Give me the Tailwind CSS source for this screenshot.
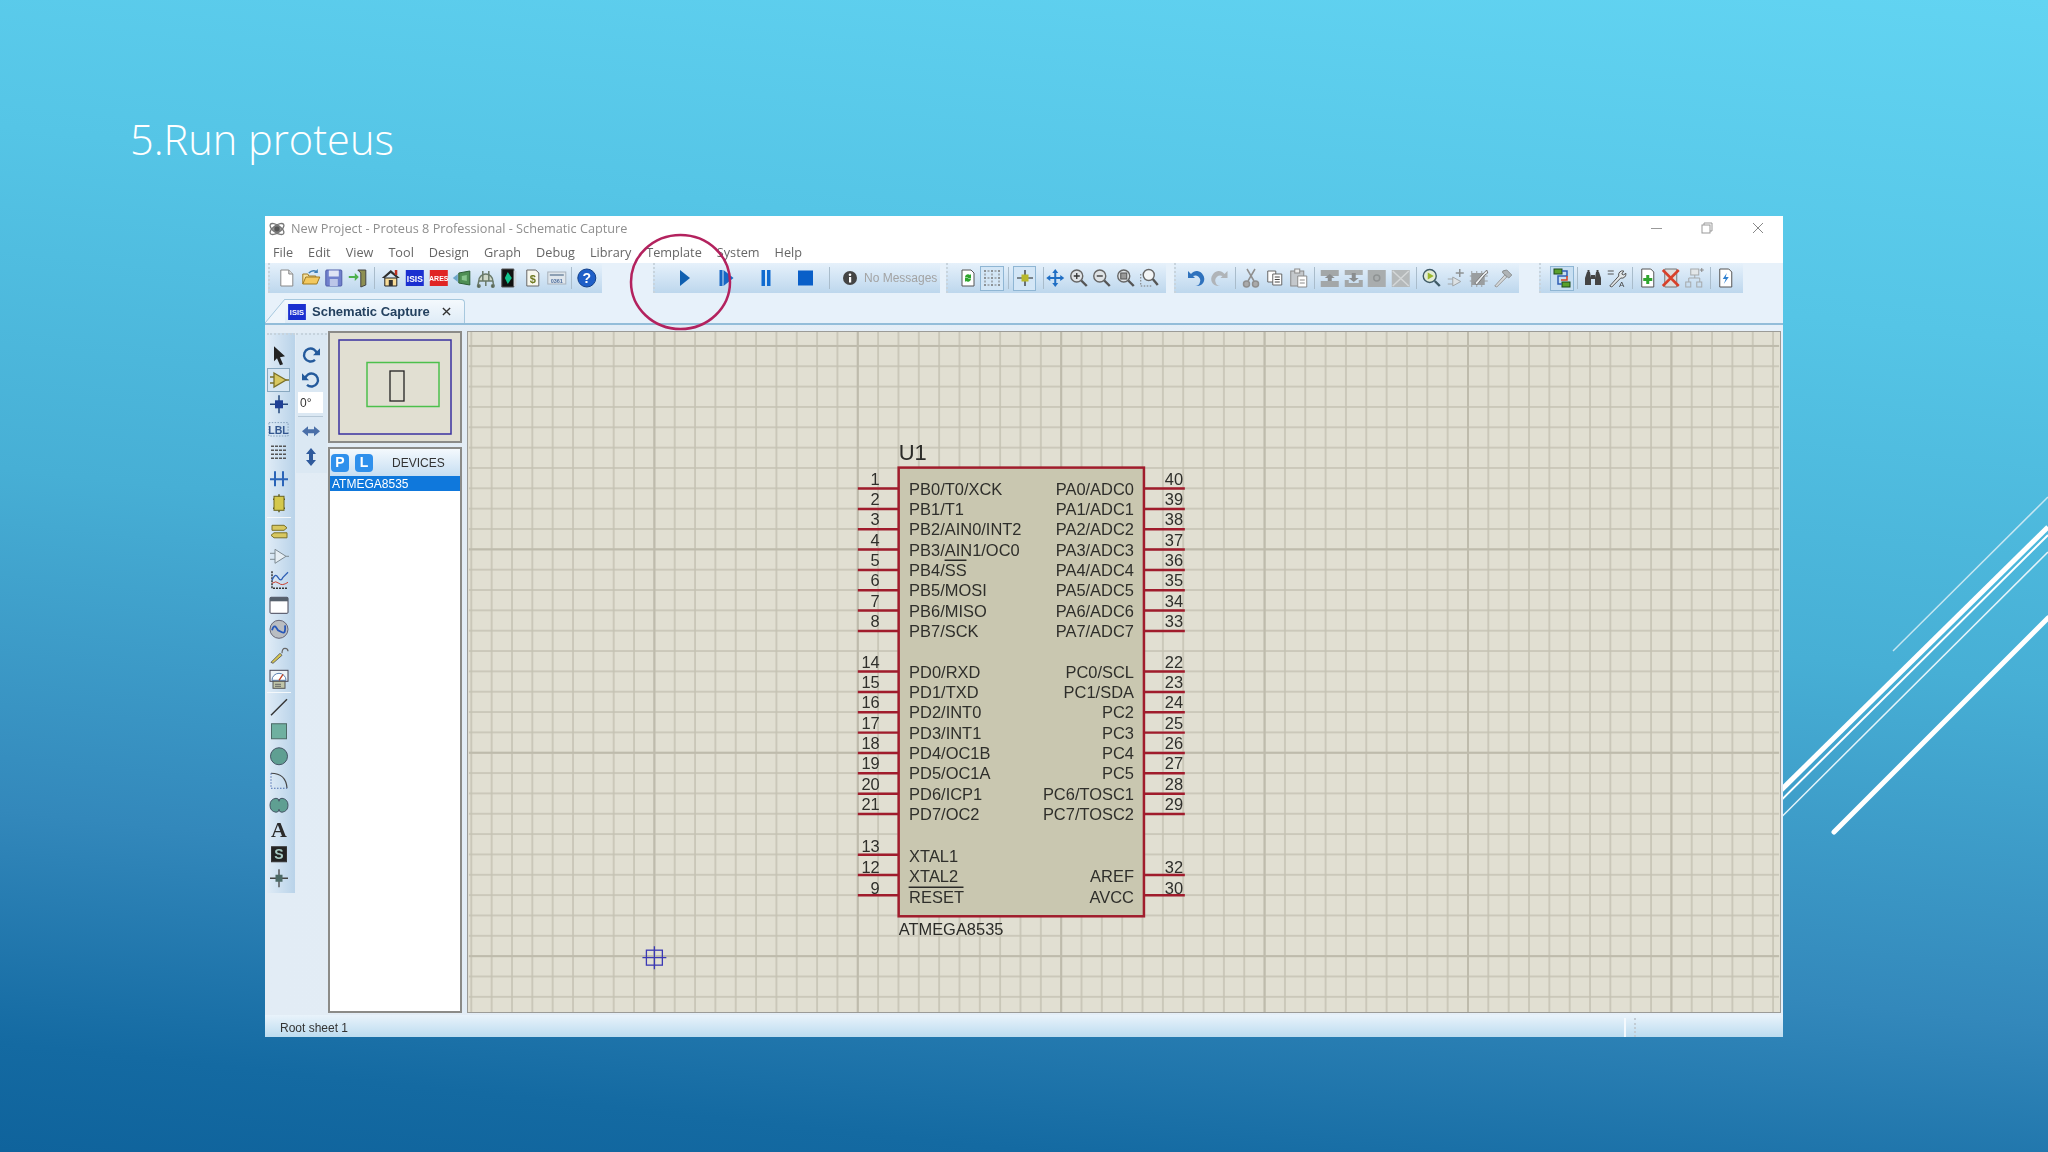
<!DOCTYPE html>
<html lang="en">
<head>
<meta charset="UTF-8">
<title>5.Run proteus</title>
<script src="https://cdn.jsdelivr.net/npm/@tailwindcss/browser@4"></script>
</head>
<body class="relative h-[1152px] w-[2048px] overflow-hidden bg-[linear-gradient(186deg,#62d4f2_0%,#55c5e6_25%,#47afd5_50%,#3388bb_75%,#146aa2_92%,#0f639c_100%)] font-['Liberation_Sans',sans-serif]">

<!-- slide decoration -->
<svg class="absolute inset-0" width="2048" height="1152" fill="none" stroke="#fff">
  <path d="M1893 651L2048 497" stroke="#c4e6f2" stroke-width="1.5"/>
  <path d="M1700 870L2048 527" stroke-width="5"/>
  <path d="M1700 881L2048 535" stroke-width="2"/>
  <path d="M1700 898L2048 552" stroke="#e4f4fa" stroke-width="1.5"/>
  <path d="M1834 832L2048 618" stroke-width="5" stroke-linecap="round"/>
</svg>

<div class="relative h-[216px] pt-[109px] pl-[130px]">
  <h1 class="font-['Open_Sans',sans-serif] text-[41.5px] leading-[60px] font-light text-white">5.Run proteus</h1>
</div>

<!-- proteus window -->
<div class="relative ml-[265px] flex h-[821px] w-[1518px] flex-col bg-white text-[12px] blur-[0.4px]">
  <!-- title bar -->
  <div class="flex h-[26px] items-center pl-[3px] font-['Open_Sans',sans-serif] text-[12.7px] text-[#8f8f8f]">
    <svg class="mr-[5px] h-[18px] w-[18px]" viewBox="0 0 20 20" fill="none" stroke="#777" stroke-width="1.5"><ellipse cx="10" cy="10" rx="9" ry="4" transform="rotate(35 10 10)"/><ellipse cx="10" cy="10" rx="9" ry="4" transform="rotate(-35 10 10)"/><circle cx="10" cy="10" r="3.5" fill="#555"/></svg>
    <span>New Project - Proteus 8 Professional - Schematic Capture</span>
    <div class="ml-auto flex items-center gap-[39px] pr-[19px] pb-[2px]">
      <div class="h-px w-[11px] bg-[#999]"></div>
      <svg class="h-[12px] w-[12px]" viewBox="0 0 12 12" fill="none" stroke="#999"><path d="M3 3V1h8v8H9"/><rect x="1" y="3" width="8" height="8"/></svg>
      <svg class="h-[12px] w-[12px]" viewBox="0 0 12 12" fill="none" stroke="#888"><path d="M1 1l10 10M11 1L1 11"/></svg>
    </div>
  </div>
  <!-- menu -->
  <div class="flex h-[21px] items-center gap-[15px] pl-[8px] font-['Open_Sans',sans-serif] text-[12.7px] text-[#666]">
    <span>File</span><span>Edit</span><span>View</span><span>Tool</span><span>Design</span><span>Graph</span><span>Debug</span><span>Library</span><span>Template</span><span>System</span><span>Help</span>
  </div>

  <!-- toolbars -->
  <div class="flex h-[30px] items-stretch bg-[#e7f1fa] pl-[3px]">
    <!-- file / app toolbar -->
    <div class="flex w-[334px] items-center border-l-2 border-dotted border-[#c8d4dd] bg-linear-to-b from-[#e6f1fb] to-[#bdd7ed] pl-[5px]">
      <svg class="h-[20px] w-[23.6px]" viewBox="0 0 20 20"><path d="M4 2h8l4 4v12H4z" fill="#fff" stroke="#888"/><path d="M12 2v4h4" fill="#ddd" stroke="#888"/></svg>
      <svg class="h-[20px] w-[23.6px]" viewBox="0 0 20 20"><path d="M2 16V6h5l1 2h7v2" fill="#f6e2a0" stroke="#a07a20"/><path d="M2 16l3-7h14l-3 7z" fill="#f3c95f" stroke="#a07a20"/><path d="M8 5q4-4 8-1" fill="none" stroke="#3f7fb5" stroke-width="1.5"/><path d="M17 1v4h-4z" fill="#3f7fb5"/></svg>
      <svg class="h-[20px] w-[23.6px]" viewBox="0 0 20 20"><rect x="2" y="2" width="16" height="16" rx="1" fill="#7080cc" stroke="#4f5ca8"/><rect x="5" y="2.5" width="10" height="6" fill="#dfe4f5"/><rect x="6" y="11" width="8" height="7" fill="#bcc6e8"/></svg>
      <svg class="h-[20px] w-[23.6px]" viewBox="0 0 20 20"><path d="M10 2h8v15l-5 2V5z" fill="#8d8f52" stroke="#444"/><path d="M1 8h6V5l4 4-4 4v-3H1z" fill="#4cb04c"/></svg>
      <div class="mx-[4.5px] h-[22px] w-px bg-[#a9bccb]"></div>
      <svg class="h-[20px] w-[23.6px]" viewBox="0 0 20 20"><path d="M4 10h12v8H4z" fill="#f7dc98" stroke="#222"/><path d="M10 2L1 10h3l6-5 6 5h3z" fill="#2f2f2f"/><rect x="14" y="2" width="2.5" height="5" fill="#c03020"/><rect x="8" y="12" width="4" height="6" fill="#333"/></svg>
      <svg class="h-[20px] w-[23.6px]" viewBox="0 0 20 20"><rect x="1" y="2" width="18" height="16" fill="#1a2fd0"/><text x="10" y="13.5" text-anchor="middle" font-size="8.5" font-weight="700" fill="#fff">ISIS</text></svg>
      <svg class="h-[20px] w-[23.6px]" viewBox="0 0 20 20"><rect x="1" y="2" width="18" height="16" fill="#e02424"/><text x="10" y="13" text-anchor="middle" font-size="7" font-weight="700" fill="#fff">ARES</text></svg>
      <svg class="h-[20px] w-[23.6px]" viewBox="0 0 20 20"><path d="M7 5l11-2v14L7 15z" fill="#4f8f55" stroke="#2d5f36"/><path d="M10 8l5-1v6l-5-1z" fill="#86c48c"/><path d="M1 10l5-4v8z" fill="#6ba5c8"/></svg>
      <svg class="h-[20px] w-[23.6px]" viewBox="0 0 20 20" fill="none" stroke="#6a7a6a" stroke-width="1.5"><path d="M3 13a7 7 0 1 1 14 0z" fill="#cfd8c8"/><path d="M3 13l-1 5M17 13l1 5M10 13v5M7 3v10M13 3v10"/><circle cx="3" cy="18" r="1.3" fill="#333"/><circle cx="17" cy="18" r="1.3" fill="#333"/></svg>
      <svg class="h-[20px] w-[23.6px]" viewBox="0 0 20 20"><path d="M3 1h12v18H3z" fill="#111" stroke="#555"/><path d="M9 4l4 6-4 6-3-6z" fill="#11c48c"/><rect x="15" y="3" width="2.5" height="15" fill="#cfd6dd"/></svg>
      <svg class="h-[20px] w-[23.6px]" viewBox="0 0 20 20"><path d="M4 2h9l3 3v13H4z" fill="#f7f7ee" stroke="#666"/><text x="10" y="15" text-anchor="middle" font-size="11" font-weight="700" fill="#6f7a22">$</text></svg>
      <svg class="h-[20px] w-[23.6px]" viewBox="0 0 20 20"><rect x="1" y="4" width="18" height="12" fill="#dfe6ec" stroke="#a8b2bc"/><rect x="3" y="6" width="14" height="2" fill="#8da0b4"/><text x="10" y="14.5" text-anchor="middle" font-size="5.5" font-weight="700" fill="#4f6f9f">0361</text></svg>
      <div class="mx-[3px] h-[22px] w-px bg-[#a9bccb]"></div>
      <svg class="h-[20px] w-[23.6px]" viewBox="0 0 20 20"><circle cx="10" cy="10" r="9" fill="#1f5fc8" stroke="#12408a"/><text x="10" y="15" text-anchor="middle" font-size="14" font-weight="700" fill="#fff">?</text></svg>
    </div>
    <!-- simulation toolbar -->
    <div class="ml-[51px] flex w-[287px] items-center border-l-2 border-dotted border-[#c8d4dd] bg-linear-to-b from-[#e6f1fb] to-[#bdd7ed] pl-[9px]">
      <svg class="h-[20px] w-[41px]" viewBox="0 0 41 20"><path d="M16 2l10 8-10 8z" fill="#0f5fb0"/></svg>
      <svg class="h-[20px] w-[41px]" viewBox="0 0 41 20"><rect x="14.5" y="2" width="3" height="16" fill="#1766c4"/><path d="M18.500 2l10 8-10 8z" fill="#1766c4"/></svg>
      <svg class="h-[20px] w-[40px]" viewBox="0 0 40 20"><rect x="15.500" y="2" width="3.5" height="16" fill="#106bd0"/><rect x="21" y="2" width="3.5" height="16" fill="#106bd0"/></svg>
      <svg class="h-[20px] w-[40px]" viewBox="0 0 40 20"><rect x="12" y="2.5" width="15" height="15" fill="#0a5fc8"/></svg>
      <div class="mr-[13px] ml-[3px] h-[22px] w-px bg-[#a9bccb]"></div>
      <svg class="mr-[7px] h-[14px] w-[14px]" viewBox="0 0 14 14"><circle cx="7" cy="7" r="7" fill="#444"/><rect x="6" y="6" width="2.2" height="5.5" fill="#fff"/><circle cx="7" cy="3.7" r="1.3" fill="#fff"/></svg>
      <span class="text-[12px] whitespace-nowrap text-[#a3a3a3]">No Messages</span>
    </div>
    <!-- view toolbar -->
    <div class="ml-[6px] flex w-[220px] items-center border-l-2 border-dotted border-[#c8d4dd] bg-linear-to-b from-[#e6f1fb] to-[#bdd7ed] pl-[8px]">
      <svg class="h-[20px] w-[24px]" viewBox="0 0 20 20"><path d="M4 2h9l3 3v13H4z" fill="#fff" stroke="#555"/><path d="M7 9a3 3 0 0 1 5-2l1-1v4H9l1-1a2 2 0 0 0-2 1zM13 11a3 3 0 0 1-5 2l-1 1v-4h4l-1 1a2 2 0 0 0 2-1z" fill="#2fa52f"/></svg>
      <div class="flex h-[25px] w-[24px] items-center justify-center border border-[#8fb6d4] bg-[#d3e6f6]">
        <svg class="h-[20px] w-[20px]" viewBox="0 0 20 20" fill="none" stroke="#777" stroke-dasharray="2 1.5"><path d="M2 3h16M2 10h16M2 17h16M3 2v16M10 2v16M17 2v16"/></svg>
      </div>
      <div class="mx-[4px] h-[22px] w-px bg-[#a9bccb]"></div>
      <div class="flex h-[25px] w-[23px] items-center justify-center border border-[#8fb6d4] bg-[#d3e6f6]">
        <svg class="h-[20px] w-[20px]" viewBox="0 0 20 20"><path d="M10 2v16M2 10h16" stroke="#222" stroke-width="1.2"/><rect x="6.5" y="6.5" width="7" height="7" fill="#b8b82c"/></svg>
      </div>
      <div class="ml-[7px] h-[22px] w-px bg-[#a9bccb]"></div>
      <svg class="h-[20px] w-[22.5px]" viewBox="0 0 20 20"><path d="M10 1l3 4h-2v4h4V7l4 3-4 3v-2h-4v4h2l-3 4-3-4h2v-4H5v2l-4-3 4-3v2h4V5H7z" fill="#1f6ec4"/></svg>
      <svg class="h-[20px] w-[23.5px]" viewBox="0 0 20 20" fill="none"><circle cx="8" cy="8" r="6" fill="#dfe3e6" stroke="#666" stroke-width="1.4"/><path d="M12.5 12.5L18 18" stroke="#555" stroke-width="2.4"/><path d="M5 8h6M8 5v6" stroke="#333" stroke-width="1.3"/></svg>
      <svg class="h-[20px] w-[23.5px]" viewBox="0 0 20 20" fill="none"><circle cx="8" cy="8" r="6" fill="#dfe3e6" stroke="#666" stroke-width="1.4"/><path d="M12.5 12.5L18 18" stroke="#555" stroke-width="2.4"/><path d="M5 8h6" stroke="#333" stroke-width="1.3"/></svg>
      <svg class="h-[20px] w-[23.5px]" viewBox="0 0 20 20" fill="none"><circle cx="8" cy="8" r="6" fill="#dfe3e6" stroke="#666" stroke-width="1.4"/><path d="M12.5 12.5L18 18" stroke="#555" stroke-width="2.4"/><rect x="5" y="5" width="6" height="6" fill="#999" stroke="#555"/></svg>
      <svg class="h-[20px] w-[23.5px]" viewBox="0 0 20 20" fill="none"><path d="M2 6v12h12" stroke="#777" stroke-dasharray="1.5 1.5"/><circle cx="10" cy="7" r="5.5" fill="#f3f5f6" stroke="#666" stroke-width="1.4"/><path d="M14 11l5 6" stroke="#555" stroke-width="2.4"/></svg>
    </div>
    <!-- edit toolbar -->
    <div class="ml-[8px] flex w-[345px] items-center border-l-2 border-dotted border-[#c8d4dd] bg-linear-to-b from-[#e6f1fb] to-[#bdd7ed] pl-[8px]">
      <svg class="h-[20px] w-[24px]" viewBox="0 0 20 20"><path d="M2 3v7h7L7 8a5 5 0 0 1 7 6 5 5 0 0 1-5 4h3a7 7 0 0 0 5-11A7 7 0 0 0 5 6z" fill="#2f72bd"/></svg>
      <svg class="h-[20px] w-[23px]" viewBox="0 0 20 20"><path d="M18 3v7h-7l2-2a5 5 0 0 0-7 6 5 5 0 0 0 5 4H8a7 7 0 0 1-5-11 7 7 0 0 1 12-1z" fill="#b0b4b8"/></svg>
      <div class="mx-[3.5px] h-[22px] w-px bg-[#a9bccb]"></div>
      <svg class="h-[20px] w-[24px]" viewBox="0 0 20 20" fill="none" stroke="#8f8f8f" stroke-width="1.5"><path d="M6 1l7 12M14 1L7 13"/><circle cx="5.5" cy="16" r="3" fill="#aaa"/><circle cx="14.5" cy="16" r="3" fill="#aaa"/></svg>
      <svg class="h-[20px] w-[23.5px]" viewBox="0 0 20 20" fill="#fff" stroke="#666"><path d="M3 3h8v11H3z"/><path d="M8 6h9v11H8z"/><path d="M10 9h5M10 11.5h5M10 14h5" stroke="#444"/></svg>
      <svg class="h-[20px] w-[23.5px]" viewBox="0 0 20 20" stroke="#8a8a8a"><rect x="2" y="3" width="13" height="15" fill="#c4c8cc"/><rect x="6" y="1" width="5" height="4" fill="#eee"/><path d="M9 8h9v11H9z" fill="#fff"/><path d="M11 12h5M11 15h5"/></svg>
      <div class="mx-[3.5px] h-[22px] w-px bg-[#a9bccb]"></div>
      <svg class="h-[20px] w-[23.5px]" viewBox="0 0 20 20"><rect x="1" y="2" width="18" height="6" fill="#a3a7a8"/><rect x="1" y="13" width="18" height="6" fill="#a3a7a8"/><path d="M10 6l5 4h-3v3H8v-3H5z" fill="#8a8d8e"/></svg>
      <svg class="h-[20px] w-[23.5px]" viewBox="0 0 20 20"><rect x="1" y="2" width="18" height="5" fill="#a9adae"/><path d="M1 12h4v3h10v-3h4v7H1z" fill="#a3a7a8"/><path d="M10 14l5-4h-3V5H8v5H5z" fill="#8a8d8e"/></svg>
      <svg class="h-[20px] w-[23.5px]" viewBox="0 0 20 20"><rect x="1" y="2" width="18" height="17" fill="#a9adae"/><circle cx="10" cy="10" r="3" fill="none" stroke="#8f9394" stroke-width="1.5"/></svg>
      <svg class="h-[20px] w-[23.5px]" viewBox="0 0 20 20"><rect x="1" y="2" width="18" height="17" fill="#b5b9ba"/><path d="M2 3l16 15M18 3L2 18" stroke="#d4d7d8" stroke-width="1.5"/></svg>
      <div class="mr-[3px] ml-[4px] h-[22px] w-px bg-[#a9bccb]"></div>
      <svg class="h-[20px] w-[23.5px]" viewBox="0 0 20 20" fill="none"><circle cx="8" cy="8" r="6.5" fill="#e3ecd6" stroke="#3f5a66" stroke-width="1.4"/><path d="M6 4.5l6 3.5-6 3.5z" fill="#9db92c"/><path d="M13 13l5 5" stroke="#3f5a66" stroke-width="2.4"/></svg>
      <svg class="h-[20px] w-[23.5px]" viewBox="0 0 20 20" fill="none" stroke="#a2a6a8"><path d="M7 9v9l8-4.500z" fill="#dde2e5"/><path d="M2 11h5M2 16h5"/><path d="M14 1v8M10 5h8" stroke-width="1.500" stroke="#8e9294"/></svg>
      <svg class="h-[20px] w-[23.5px]" viewBox="0 0 20 20"><rect x="3" y="5" width="13" height="12" fill="#9a9ea0"/><path d="M3 3v16M8 3v16M13 3v16M1 8h18M1 13h18" stroke="#9a9ea0"/><path d="M6 15L15 5l3-3 1 3-3 2-8 10z" fill="#e9edef" stroke="#777"/></svg>
      <svg class="h-[20px] w-[23.5px]" viewBox="0 0 20 20"><path d="M2 18L12 7l2 2L4 19z" fill="#d6dadc" stroke="#999"/><path d="M10 3l4-1 5 5-3 3-6-5z" fill="#b0b4b6" stroke="#8b8f91"/></svg>
    </div>
    <!-- design toolbar -->
    <div class="ml-[20px] flex w-[204px] items-center border-l-2 border-dotted border-[#c8d4dd] bg-linear-to-b from-[#e6f1fb] to-[#bdd7ed] pl-[9px]">
      <div class="flex h-[25px] w-[24px] items-center justify-center border border-[#8fb6d4] bg-[#c8dff2]">
        <svg class="h-[20px] w-[20px]" viewBox="0 0 20 20" fill="none"><rect x="2" y="1" width="8" height="5" fill="#5aa02c" stroke="#1c4a1c"/><rect x="10" y="14" width="8" height="5" fill="#5aa02c" stroke="#1c4a1c"/><path d="M10 3h5v5H6v8h4" stroke="#2f5fb4" stroke-width="1.5"/><path d="M15 8v4H9" stroke="#d84020" stroke-width="1.500"/></svg>
      </div>
      <div class="mx-[3px] h-[22px] w-px bg-[#a9bccb]"></div>
      <svg class="h-[20px] w-[24px]" viewBox="0 0 20 20" fill="#444"><path d="M2 10l2-6h3l1 6v7H2zM12 10l1-6h3l2 6v7h-6z"/><rect x="8" y="7" width="4" height="4"/><rect x="4.500" y="2" width="2" height="3"/><rect x="13.500" y="2" width="2" height="3"/></svg>
      <svg class="h-[20px] w-[23.500px]" viewBox="0 0 20 20"><path d="M1 3h6M1 6h6" stroke="#555" stroke-width="1.2"/><path d="M3 18L12 8a4 4 0 0 1 5-5l-2 3 2 1 2-2a4 4 0 0 1-5 5l-9 9z" fill="#e3e7e9" stroke="#555"/><text x="15" y="19" text-anchor="middle" font-size="8" fill="#444">A</text></svg>
      <div class="mx-[3px] h-[22px] w-px bg-[#a9bccb]"></div>
      <svg class="h-[20px] w-[23.5px]" viewBox="0 0 20 20"><path d="M4 1h9l3 3v15H4z" fill="#fff" stroke="#555"/><path d="M8.500 7h3v3h3v3h-3v3h-3v-3h-3v-3h3z" fill="#2fa52f"/></svg>
      <svg class="h-[20px] w-[23.5px]" viewBox="0 0 20 20"><path d="M4 1h12v18H4z" fill="#ddd" stroke="#777"/><path d="M2 2l16 16M18 2L2 18" stroke="#d8402a" stroke-width="2.500"/></svg>
      <svg class="h-[20px] w-[23.5px]" viewBox="0 0 20 20" fill="none" stroke="#a5a9ab"><rect x="6" y="1" width="8" height="6" fill="#e3e7e9"/><rect x="1" y="14" width="5" height="5"/><rect x="12" y="14" width="5" height="5"/><path d="M10 7v3M4 14v-4h11v4"/><path d="M15 2h4M17 0v4" stroke="#888"/></svg>
      <div class="mx-[3.5px] h-[22px] w-px bg-[#a9bccb]"></div>
      <svg class="h-[20px] w-[23.5px]" viewBox="0 0 20 20"><path d="M4 1h9l3 3v15H4z" fill="#fff" stroke="#555"/><path d="M11 5L7 11h3l-2 5 5-7h-3z" fill="#2f80d0"/></svg>
    </div>
  </div>

  <!-- tab strip -->
  <div class="flex h-[30px] items-end bg-[#e7f1fa] pl-[20px]">
    <div class="relative flex h-[24px] w-[180px] items-center rounded-tr-[4px] border-t border-r border-[#a7c8de] bg-linear-to-b from-[#f4f9fd] to-[#dfecf7]">
      <svg class="absolute top-[-1px] left-[-20px] h-[24px] w-[20px]" viewBox="0 0 20 24" preserveAspectRatio="none"><path d="M0 24L20 0v24z" fill="#eef5fb"/><path d="M0 24L20 0" fill="none" stroke="#a7c8de"/></svg>
      <svg class="ml-[3px] h-[16px] w-[18px] shrink-0" viewBox="0 0 20 18"><rect x="0" y="0" width="20" height="18" fill="#1a2fd0"/><text x="10" y="12.500" text-anchor="middle" font-size="8.500" font-weight="700" fill="#fff">ISIS</text></svg>
      <span class="ml-[6px] text-[13px] font-bold whitespace-nowrap text-[#24415f]">Schematic Capture</span>
      <svg class="ml-[12px] h-[9px] w-[9px] shrink-0" viewBox="0 0 10 10" fill="none" stroke="#333" stroke-width="1.500"><path d="M1 1l8 8M9 1L1 9"/></svg>
    </div>
  </div>
  <div class="h-[2px] bg-[#93bdd9]"></div>

  <!-- main area -->
  <div class="flex h-[690px] bg-linear-to-r from-[#e2ecf5] to-[#e6f0f9] pt-[6px] pb-[2px] pl-[2px]">
    <!-- mode toolbar -->
    <div class="mt-[2px] flex h-[560px] w-[28px] flex-col items-center border-t-2 border-dotted border-[#c6d3dd] bg-linear-to-r from-[#dfebf6] to-[#b9d3e9] pt-[8px] pr-[5px]">
      <svg class="h-[24.6px] w-[20px] shrink-0" viewBox="0 0 20 20"><path d="M5 1l11 10-5 1 3 7-3 1-3-7-3 3z" fill="#222"/></svg>
      <div class="flex h-[24.6px] w-[23px] shrink-0 items-center justify-center border border-[#88a8c0] bg-[#d6e6f3]">
        <svg class="h-[20px] w-[20px]" viewBox="0 0 20 20"><path d="M5 3l12 7-12 7z" fill="#d8c860" stroke="#7a7028" stroke-width="1.300"/><path d="M1 7h4M1 13h4M17 10h3" stroke="#7a7028" stroke-width="1.300"/></svg>
      </div>
      <svg class="h-[24.6px] w-[20px] shrink-0" viewBox="0 0 20 20"><path d="M10 1v18M1 10h18" stroke="#23477c" stroke-width="1.500"/><rect x="6" y="6" width="8" height="8" fill="#1f3f95"/></svg>
      <svg class="h-[24.6px] w-[23px] shrink-0" viewBox="0 0 24 20"><rect x="2" y="3" width="20" height="14" fill="none" stroke="#7f9cb8" stroke-dasharray="1.500 1.500"/><text x="12" y="14.500" text-anchor="middle" font-size="11" font-weight="700" fill="#34578f">LBL</text></svg>
      <svg class="h-[24.6px] w-[20px] shrink-0" viewBox="0 0 20 20" fill="none" stroke="#555" stroke-width="1.500" stroke-dasharray="3 1"><path d="M2 3h16M2 7h16M2 11h16M2 15h16"/></svg>
      <svg class="h-[24.6px] w-[20px] shrink-0" viewBox="0 0 20 20" fill="none" stroke="#2a64b8" stroke-width="2"><path d="M1 11h18M6 3v15M14 3v15"/></svg>
      <svg class="h-[24.6px] w-[20px] shrink-0" viewBox="0 0 20 20"><path d="M10 1v18M4 6h12M4 15h12" stroke="#5a5518" stroke-width="1.400"/><rect x="5" y="3" width="10" height="14" fill="#d4c84c" stroke="#6a6420"/></svg>
      <div class="my-[1.400px] h-px w-[24px] shrink-0 bg-[#f4f8fb]"></div>
      <svg class="h-[24.6px] w-[20px] shrink-0" viewBox="0 0 20 20"><path d="M3 4h12l3 2.500-3 2.500H3z" fill="#d8c860" stroke="#7a7028"/><path d="M2 14l3-2.500h13v5H5z" fill="#d8c860" stroke="#7a7028"/></svg>
      <svg class="h-[24.6px] w-[20px] shrink-0" viewBox="0 0 20 20" fill="none" stroke="#7d8a92"><path d="M6 3l11 7-11 7z" fill="#e6eef4"/><path d="M1 7h5M1 13h5M17 10h3"/></svg>
      <svg class="h-[24.6px] w-[20px] shrink-0" viewBox="0 0 20 20" fill="none"><path d="M3 1v17h16" stroke="#333" stroke-dasharray="2 1" stroke-width="1.500"/><path d="M3 10q3-8 6-3t5 0l5-5" stroke="#2f5fb4" stroke-width="1.300"/><path d="M3 13q4-3 7 0t9-1" stroke="#c84030"/></svg>
      <svg class="h-[24.6px] w-[20px] shrink-0" viewBox="0 0 20 20"><rect x="1" y="2" width="18" height="16" rx="1" fill="#fff" stroke="#445"/><rect x="1" y="2" width="18" height="4" fill="#55606c"/></svg>
      <svg class="h-[24.6px] w-[20px] shrink-0" viewBox="0 0 20 20"><circle cx="10" cy="10" r="9" fill="#b9bdc2" stroke="#667"/><path d="M3 11q2-6 4-3t2 3 4 2 3-7" fill="none" stroke="#2757b8" stroke-width="1.800"/></svg>
      <svg class="h-[24.6px] w-[20px] shrink-0" viewBox="0 0 20 20" fill="none"><path d="M2 18L11 9l2 2-9 8z" fill="#d8c84c" stroke="#666"/><path d="M13 9q0-5 3-5t3 3" stroke="#666" stroke-width="1.200"/></svg>
      <svg class="h-[24.6px] w-[20px] shrink-0" viewBox="0 0 20 20"><rect x="1" y="1" width="18" height="11" fill="#eef3f6" stroke="#445"/><path d="M3 11a7 7 0 0 1 14 0z" fill="#fff" stroke="#5a7fb0"/><path d="M10 11l4-6" stroke="#c04020" stroke-width="1.300"/><rect x="4" y="12" width="12" height="7" fill="#bfc4a8" stroke="#555"/><path d="M6 15h6M6 17h6" stroke="#666"/></svg>
      <div class="my-[1.400px] h-px w-[24px] shrink-0 bg-[#f4f8fb]"></div>
      <svg class="h-[24.5px] w-[20px] shrink-0" viewBox="0 0 20 20"><path d="M2 18L18 2" stroke="#333" stroke-width="1.400"/></svg>
      <svg class="h-[24.5px] w-[20px] shrink-0" viewBox="0 0 20 20"><rect x="2.500" y="2.500" width="15" height="15" fill="#6fb0a0" stroke="#4c6a66"/></svg>
      <svg class="h-[24.5px] w-[20px] shrink-0" viewBox="0 0 20 20"><circle cx="10" cy="10" r="8.500" fill="#5f9f92" stroke="#456"/></svg>
      <svg class="h-[24.5px] w-[20px] shrink-0" viewBox="0 0 20 20" fill="none"><path d="M2 3q15 0 16 15" stroke="#444" stroke-width="1.200"/><path d="M2 3v15h16" stroke="#4f6fb0" stroke-dasharray="1.500 1.500"/></svg>
      <svg class="h-[24.5px] w-[20px] shrink-0" viewBox="0 0 20 20"><path d="M7 3q3 0 3 3 0-3 3-3 6 1 6 7t-6 7q-3 0-3-3 0 3-3 3-6-1-6-7t6-7z" fill="#5f9f92" stroke="#456"/></svg>
      <svg class="h-[24.5px] w-[20px] shrink-0" viewBox="0 0 20 20"><text x="10" y="18" text-anchor="middle" font-size="22" font-weight="700" font-family="Liberation Serif" fill="#2b2b2b">A</text></svg>
      <svg class="h-[24.5px] w-[20px] shrink-0" viewBox="0 0 20 20"><rect x="2.500" y="2.500" width="15" height="15" fill="#222" stroke="#333"/><text x="10" y="15" text-anchor="middle" font-size="14" font-weight="700" fill="#a8ccc4">S</text></svg>
      <svg class="h-[24.5px] w-[20px] shrink-0" viewBox="0 0 20 20"><path d="M10 1v18M1 10h18" stroke="#444" stroke-width="1.300"/><rect x="6.500" y="6.500" width="7" height="7" fill="#4c6a66"/></svg>
    </div>
    <!-- orientation toolbar -->
    <div class="mt-[2px] ml-px flex h-[140px] w-[31px] flex-col items-center border-t-2 border-dotted border-[#c6d3dd] bg-[#dbe8f3] pt-[8px] pr-[2px]">
      <svg class="h-[24.6px] w-[20px] shrink-0" viewBox="0 0 20 20" fill="none"><path d="M16 9a6.500 6.500 0 1 0-2 5.500" stroke="#245a9c" stroke-width="2.400"/><path d="M19 3v7h-7z" fill="#245a9c"/></svg>
      <svg class="h-[24.6px] w-[20px] shrink-0" viewBox="0 0 20 20" fill="none"><path d="M4 9a6.500 6.500 0 1 1 2 5.500" stroke="#245a9c" stroke-width="2.400"/><path d="M1 3v7h7z" fill="#245a9c"/></svg>
      <div class="flex h-[21px] w-[25px] shrink-0 items-center bg-white pl-[2px] text-[12px] text-[#333]">0°</div>
      <div class="mt-[3px] h-px w-[25px] shrink-0 bg-[#b5c7d6]"></div>
      <svg class="mt-[2px] h-[24.6px] w-[20px] shrink-0" viewBox="0 0 20 20"><path d="M1 10l6-5v3h6V5l6 5-6 5v-3H7v3z" fill="#4a6fa8"/></svg>
      <svg class="h-[26px] w-[20px] shrink-0" viewBox="0 0 20 20"><path d="M10 1l5 6h-3v6h3l-5 6-5-6h3V7H5z" fill="#2f5a9c"/></svg>
    </div>
    <!-- overview + device list -->
    <div class="ml-px flex w-[134px] flex-col">
      <div class="h-[112px] border-2 border-[#8b8b88] bg-[#e1dfd2]">
        <svg class="h-full w-full" viewBox="330 333 130 108" fill="none"><rect x="339" y="340" width="112" height="94" stroke="#3a32a0" stroke-width="1.500"/><rect x="367" y="362.500" width="72" height="44" stroke="#4cc04c" stroke-width="1.500"/><rect x="390" y="371" width="14" height="30" stroke="#222" stroke-width="1.300"/></svg>
      </div>
      <div class="mt-[4px] flex flex-1 flex-col border-2 border-[#8b8b88] bg-white">
        <div class="flex h-[27px] items-center gap-[6px] bg-linear-to-b from-[#f4f9fd] to-[#c6def2] pl-[1px]">
          <span class="flex h-[18px] w-[18px] items-center justify-center rounded-[4px] bg-[#2f90ec] text-[14px] font-bold text-white">P</span>
          <span class="flex h-[18px] w-[18px] items-center justify-center rounded-[4px] bg-[#2f90ec] text-[14px] font-bold text-white">L</span>
          <span class="ml-[13px] text-[12px] text-[#333]">DEVICES</span>
        </div>
        <div class="flex h-[15px] items-center bg-[#0f78dc] pl-[2px] text-[12px] text-white">ATMEGA8535</div>
      </div>
    </div>
    <!-- schematic canvas -->
    <div class="ml-[5px] w-[1314px] border-[1.500px] border-[#9b9b97] bg-[#e1dfd2]">
      <svg class="block h-full w-full" viewBox="467 331 1314 682" fill="none">
        <defs>
          <pattern id="minor" patternUnits="userSpaceOnUse" x="652" y="344" width="20.4" height="20.4"><path d="M1 0V20.400M0 1H20.400" stroke="#c4c1b2" stroke-width="1.500"/></pattern>
          <pattern id="major" patternUnits="userSpaceOnUse" x="652" y="344" width="204" height="204"><path d="M1 0V204M0 1H204" stroke="#bebbac" stroke-width="2"/></pattern>
        </defs>
        <rect x="467" y="331" width="1314" height="682" fill="url(#minor)"/>
        <rect x="467" y="331" width="1314" height="682" fill="url(#major)"/>
        <!-- origin marker -->
        <g stroke="#3b39b4" stroke-width="1.300"><rect x="645" y="951" width="16" height="15"/><path d="M653 947V970M641 958.500H665"/></g>
        <!-- U1 -->
        <rect x="898" y="467" width="246" height="450" fill="#c9c7b0" stroke="#a01c2c" stroke-width="2.500"/>
        <path stroke="#a01c2c" stroke-width="2.500" d="M857 488H898M857 508.400H898M857 528.800H898M857 549.200H898M857 569.600H898M857 590H898M857 610.400H898M857 630.800H898M857 671.600H898M857 692H898M857 712.400H898M857 732.800H898M857 753.200H898M857 773.600H898M857 794H898M857 814.400H898M857 855.200H898M857 875.600H898M857 896H898M1144 488H1185M1144 508.400H1185M1144 528.800H1185M1144 549.200H1185M1144 569.600H1185M1144 590H1185M1144 610.400H1185M1144 630.800H1185M1144 671.600H1185M1144 692H1185M1144 712.400H1185M1144 732.800H1185M1144 753.200H1185M1144 773.600H1185M1144 794H1185M1144 814.400H1185M1144 875.600H1185M1144 896H1185"/>
        <text x="898" y="459" font-size="22" fill="#2b2b28">U1</text>
        <text x="898" y="935.500" font-size="16.500" fill="#2b2b28">ATMEGA8535</text>
        <path stroke="#2b2b28" stroke-width="1.500" d="M944 560H966M908 888H963"/>
        <g font-size="16.500" fill="#2f2f2b">
          <text x="908.500" y="494">PB0/T0/XCK</text>
          <text x="908.500" y="514.400">PB1/T1</text>
          <text x="908.500" y="534.800">PB2/AIN0/INT2</text>
          <text x="908.500" y="555.200">PB3/AIN1/OC0</text>
          <text x="908.500" y="575.600">PB4/SS</text>
          <text x="908.500" y="596">PB5/MOSI</text>
          <text x="908.500" y="616.400">PB6/MISO</text>
          <text x="908.500" y="636.800">PB7/SCK</text>
          <text x="908.500" y="677.600">PD0/RXD</text>
          <text x="908.500" y="698">PD1/TXD</text>
          <text x="908.500" y="718.400">PD2/INT0</text>
          <text x="908.500" y="738.800">PD3/INT1</text>
          <text x="908.500" y="759.200">PD4/OC1B</text>
          <text x="908.500" y="779.600">PD5/OC1A</text>
          <text x="908.500" y="800">PD6/ICP1</text>
          <text x="908.500" y="820.400">PD7/OC2</text>
          <text x="908.500" y="862.200">XTAL1</text>
          <text x="908.500" y="883">XTAL2</text>
          <text x="908.500" y="903.500">RESET</text>
        </g>
        <g font-size="16.500" fill="#2f2f2b" text-anchor="end">
          <text x="1134" y="494">PA0/ADC0</text>
          <text x="1134" y="514.400">PA1/ADC1</text>
          <text x="1134" y="534.800">PA2/ADC2</text>
          <text x="1134" y="555.200">PA3/ADC3</text>
          <text x="1134" y="575.600">PA4/ADC4</text>
          <text x="1134" y="596">PA5/ADC5</text>
          <text x="1134" y="616.400">PA6/ADC6</text>
          <text x="1134" y="636.800">PA7/ADC7</text>
          <text x="1134" y="677.600">PC0/SCL</text>
          <text x="1134" y="698">PC1/SDA</text>
          <text x="1134" y="718.400">PC2</text>
          <text x="1134" y="738.800">PC3</text>
          <text x="1134" y="759.200">PC4</text>
          <text x="1134" y="779.600">PC5</text>
          <text x="1134" y="800">PC6/TOSC1</text>
          <text x="1134" y="820.400">PC7/TOSC2</text>
          <text x="1134" y="883">AREF</text>
          <text x="1134" y="903.500">AVCC</text>
        </g>
        <g font-size="16.500" fill="#2f2f2b" text-anchor="end">
          <text x="879" y="484">1</text><text x="879" y="504.400">2</text><text x="879" y="524.800">3</text><text x="879" y="545.200">4</text><text x="879" y="565.600">5</text><text x="879" y="586">6</text><text x="879" y="606.400">7</text><text x="879" y="626.800">8</text>
          <text x="879" y="667.600">14</text><text x="879" y="688">15</text><text x="879" y="708.400">16</text><text x="879" y="728.800">17</text><text x="879" y="749.200">18</text><text x="879" y="769.600">19</text><text x="879" y="790">20</text><text x="879" y="810.400">21</text>
          <text x="879" y="852.200">13</text><text x="879" y="873.600">12</text><text x="879" y="894.500">9</text>
        </g>
        <g font-size="16.500" fill="#2f2f2b">
          <text x="1165" y="484">40</text><text x="1165" y="504.400">39</text><text x="1165" y="524.800">38</text><text x="1165" y="545.200">37</text><text x="1165" y="565.600">36</text><text x="1165" y="586">35</text><text x="1165" y="606.400">34</text><text x="1165" y="626.800">33</text>
          <text x="1165" y="667.600">22</text><text x="1165" y="688">23</text><text x="1165" y="708.400">24</text><text x="1165" y="728.800">25</text><text x="1165" y="749.200">26</text><text x="1165" y="769.600">27</text><text x="1165" y="790">28</text><text x="1165" y="810.400">29</text>
          <text x="1165" y="873.600">32</text><text x="1165" y="894.500">30</text>
        </g>
      </svg>
    </div>
  </div>

  <!-- status bar -->
  <div class="flex h-[22px] flex-1 items-center bg-linear-to-b from-[#e9f3fb] to-[#bcdcf0] pt-[3px] pl-[15px] text-[12px] text-[#333]">
    <span>Root sheet 1</span>
    <div class="ml-[1276px] h-full w-[2px] bg-[#f4f9fd]"></div>
    <div class="ml-[8px] h-full border-l-2 border-dotted border-[#c2ccd4]"></div>
  </div>

  <!-- red circle annotation over the toolbar -->
  <svg class="absolute top-0 left-0 h-[130px] w-[500px]" viewBox="265 216 500 130" fill="none"><ellipse cx="680.500" cy="282" rx="49.500" ry="47" stroke="#b3225e" stroke-width="2.500"/></svg>
</div>
</body>
</html>
